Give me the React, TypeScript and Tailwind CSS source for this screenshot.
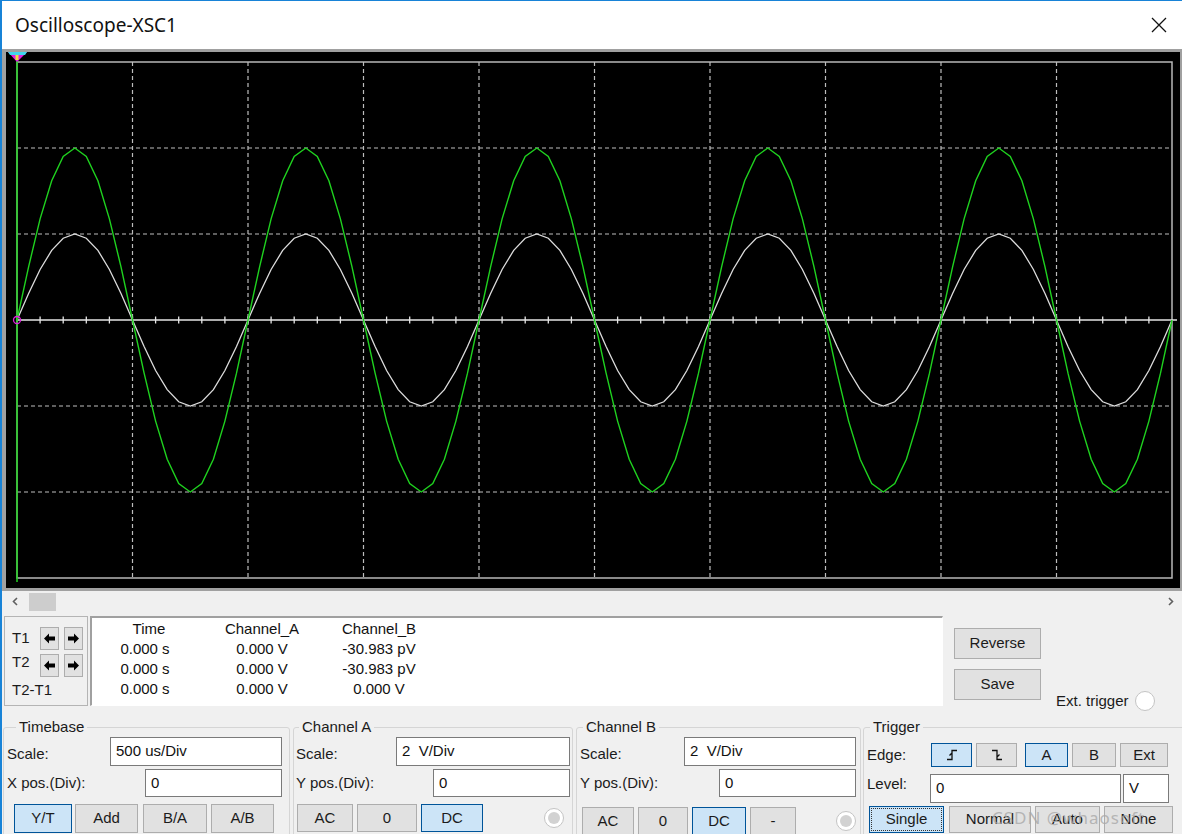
import React from "react";

const GREEN = "#1fd21f";

function wave(amp: number) {
  const pts: string[] = [];
  for (let i = 0; i <= 100; i++) {
    const x = 17 + i * 11.55;
    const y = 320 - amp * Math.sin((2 * Math.PI * (x - 17)) / 231);
    pts.push(`${x.toFixed(1)},${y.toFixed(1)}`);
  }
  return pts.join(" ");
}

function Scope() {
  const vx = [1, 2, 3, 4, 5, 6, 7, 8, 9].map((i) => 17 + i * 115.5);
  const hy = [1, 2, 4, 5].map((j) => 62 + j * 86);
  const ticks = Array.from({ length: 49 }, (_, k) => 17 + (k + 1) * 23.1);
  return (
    <svg width="1174" height="536" viewBox="6 52 1174 536" className="block">
      <rect x="17" y="62" width="1155" height="516" fill="none" stroke="#b8b8b8" strokeWidth="1.5" />
      {vx.map((x) => (
        <line key={x} x1={x} y1="62" x2={x} y2="578" stroke="#bdbdbd" strokeWidth="1.2" strokeDasharray="4 3" />
      ))}
      {hy.map((y) => (
        <line key={y} x1="17" y1={y} x2="1172" y2={y} stroke="#bdbdbd" strokeWidth="1.2" strokeDasharray="4 3" />
      ))}
      <line x1="17" y1="320" x2="1177" y2="320" stroke="#e6e6e6" strokeWidth="1.5" />
      {ticks.map((x) => (
        <line key={x} x1={x} y1="316.5" x2={x} y2="323.5" stroke="#e6e6e6" strokeWidth="1.3" />
      ))}
      <polyline points={wave(86)} fill="none" stroke="#dcdcdc" strokeWidth="1.3" />
      <polyline points={wave(172)} fill="none" stroke={GREEN} strokeWidth="1.4" />
      <line x1="17" y1="60" x2="17" y2="582" stroke={GREEN} strokeWidth="1.5" />
      <polygon points="8,52 27,52 17,62" fill="#e01fe0" />
      <polygon points="8,52 27,52 25,55 10,55" fill="#3fd6ee" />
      <rect x="15.5" y="55" width="3" height="5" fill="#f0e040" />
      <circle cx="17" cy="320" r="3.5" fill="none" stroke="#e01fe0" strokeWidth="1.3" />
    </svg>
  );
}

function Arrow({ dir }: { dir: "l" | "r" }) {
  return (
    <svg width="11" height="11" viewBox="0 0 11 11">
      <polygon
        points={dir === "l" ? "0,5.5 5,0.5 5,3.5 11,3.5 11,7.5 5,7.5 5,10.5" : "11,5.5 6,0.5 6,3.5 0,3.5 0,7.5 6,7.5 6,10.5"}
        fill="#000"
      />
    </svg>
  );
}

function ArrowBtn({ dir }: { dir: "l" | "r" }) {
  return (
    <div className="flex h-[23px] w-[19px] items-center justify-center border border-[#adadad] bg-[#e1e1e1]">
      <Arrow dir={dir} />
    </div>
  );
}

function Btn({ label, w, h = 29, on = false, children }: { label?: string; w: number; h?: number; on?: boolean; children?: React.ReactNode }) {
  return (
    <div
      style={{ width: w, height: h }}
      className={`flex shrink-0 items-center justify-center border ${on ? "border-[#005499] bg-[#cce4f7]" : "border-[#adadad] bg-[#e1e1e1]"}`}
    >
      {children ?? label}
    </div>
  );
}

function Field({ value, w, h = 29 }: { value: string; w: number; h?: number }) {
  return (
    <div style={{ width: w, height: h }} className="flex shrink-0 items-center whitespace-pre border border-[#7a7a7a] bg-white pl-[5px] text-[#111]">
      {value}
    </div>
  );
}

function Radio({ filled }: { filled?: boolean }) {
  return (
    <div className="flex h-[20px] w-[20px] items-center justify-center rounded-full border border-[#c4c4c4] bg-white">
      {filled && <div className="h-[12px] w-[12px] rounded-full bg-[#d2d2d2]" />}
    </div>
  );
}

export default function App() {
  return (
    <div className="relative h-[834px] w-[1182px] overflow-hidden border-l-2 border-t border-[#1883d7] bg-[#f0f0f0] font-['Liberation_Sans',Arial,sans-serif] text-[15px] text-[#1b1b1b]">
      <div className="flex h-[48px] items-center justify-between bg-white pl-[13px] pr-[14px]">
        <span className="font-['Noto_Sans',sans-serif] text-[19px] text-[#111]">Oscilloscope-XSC1</span>
        <svg width="16" height="16" viewBox="0 0 16 16" className="mr-[1px]">
          <path d="M1 1 L15 15 M15 1 L1 15" stroke="#111" strokeWidth="1.3" />
        </svg>
      </div>

      <div className="h-[542px] border-b-[3px] border-l-[4px] border-r-[2px] border-t-[3px] border-[#a0a0a0] bg-black">
        <Scope />
      </div>

      <div className="flex h-[21px] items-center">
        <svg width="6" height="9" viewBox="0 0 6 9" className="ml-[10px]">
          <path d="M5 1 L1.5 4.5 L5 8" stroke="#606060" strokeWidth="1.6" fill="none" />
        </svg>
        <div className="ml-[11px] h-[18px] w-[27px] bg-[#cdcdcd]" />
        <svg width="6" height="9" viewBox="0 0 6 9" className="ml-auto mr-[8px]">
          <path d="M1 1 L4.5 4.5 L1 8" stroke="#606060" strokeWidth="1.6" fill="none" />
        </svg>
      </div>

      <div className="mt-[4px] flex h-[90px] pl-[2px]">
        <div className="w-[84px] border border-[#b4b4b4] pl-[7px] pt-[10px]">
          <div className="flex h-[23px] items-center">
            <span className="w-[28px]">T1</span>
            <ArrowBtn dir="l" />
            <div className="w-[5px]" />
            <ArrowBtn dir="r" />
          </div>
          <div className="mt-[4px] flex h-[23px] items-center">
            <span className="-mt-[6px] w-[28px]">T2</span>
            <ArrowBtn dir="l" />
            <div className="w-[5px]" />
            <ArrowBtn dir="r" />
          </div>
          <div className="mt-[3px] h-[20px] leading-[20px]">T2-T1</div>
        </div>
        <div className="ml-[2px] w-[853px] border-b border-l-2 border-r border-t-2 border-b-white border-l-[#a0a0a0] border-r-white border-t-[#a0a0a0] bg-white pt-[1px] leading-[20px] text-[#111]">
          <div className="grid grid-cols-[106px_128px_106px] text-center">
            <span className="pl-[8px]">Time</span>
            <span>Channel_A</span>
            <span>Channel_B</span>
            <span>0.000 s</span>
            <span>0.000 V</span>
            <span>-30.983 pV</span>
            <span>0.000 s</span>
            <span>0.000 V</span>
            <span>-30.983 pV</span>
            <span>0.000 s</span>
            <span>0.000 V</span>
            <span>0.000 V</span>
          </div>
        </div>
        <div className="ml-[11px] flex flex-col pt-[12px]">
          <Btn label="Reverse" w={87} h={31} />
          <div className="h-[10px]" />
          <Btn label="Save" w={87} h={31} />
        </div>
        <div className="ml-[15px] flex items-end gap-[6px]">
          <span className="mb-[-5px] leading-[20px]">Ext. trigger</span>
          <div className="mb-[-5px]">
            <Radio />
          </div>
        </div>
      </div>

      <div className="mt-[11px] flex items-start">
        <fieldset className="ml-[1px] h-[140px] w-[287px] shrink-0 rounded-[3px] border border-[#d5d5d5] pl-[3px] pr-[7px]">
          <legend className="ml-[9px] px-[3px] leading-[20px]">Timebase</legend>
          <div className="flex h-[29px] items-center justify-between">
            <span className="mt-[5px]">Scale:</span>
            <Field value="500 us/Div" w={172} />
          </div>
          <div className="mt-[3px] flex h-[28px] items-center justify-between">
            <span>X pos.(Div):</span>
            <Field value="0" w={137} h={28} />
          </div>
          <div className="ml-[7px] mt-[7px] flex">
            <Btn label="Y/T" w={58} on />
            <div className="w-[3px]" />
            <Btn label="Add" w={63} />
            <div className="w-[5px]" />
            <Btn label="B/A" w={64} />
            <div className="w-[4px]" />
            <Btn label="A/B" w={63} />
          </div>
        </fieldset>

        <fieldset className="ml-[3px] h-[140px] w-[280px] shrink-0 rounded-[3px] border border-[#d5d5d5] pl-[2px] pr-[2px]">
          <legend className="ml-[3px] px-[3px] leading-[20px]">Channel A</legend>
          <div className="flex h-[29px] items-center justify-between">
            <span className="mt-[5px]">Scale:</span>
            <Field value="2  V/Div" w={174} />
          </div>
          <div className="mt-[3px] flex h-[28px] items-center justify-between">
            <span>Y pos.(Div):</span>
            <Field value="0" w={137} h={28} />
          </div>
          <div className="ml-[1px] mt-[7px] flex items-center">
            <Btn label="AC" w={56} h={28} />
            <div className="w-[4px]" />
            <Btn label="0" w={60} h={28} />
            <div className="w-[4px]" />
            <Btn label="DC" w={62} h={28} on />
            <div className="ml-[61px]">
              <Radio filled />
            </div>
          </div>
        </fieldset>

        <fieldset className="ml-[3px] h-[140px] w-[284px] shrink-0 rounded-[3px] border border-[#d5d5d5] pl-[3px] pr-[4px]">
          <legend className="ml-[3px] px-[3px] leading-[20px]">Channel B</legend>
          <div className="flex h-[29px] items-center justify-between">
            <span className="mt-[5px]">Scale:</span>
            <Field value="2  V/Div" w={172} />
          </div>
          <div className="mt-[3px] flex h-[28px] items-center justify-between">
            <span>Y pos.(Div):</span>
            <Field value="0" w={137} h={28} />
          </div>
          <div className="ml-[2px] mt-[10px] flex items-center">
            <Btn label="AC" w={52} h={28} />
            <div className="w-[4px]" />
            <Btn label="0" w={50} h={28} />
            <div className="w-[4px]" />
            <Btn label="DC" w={54} h={28} on />
            <div className="w-[4px]" />
            <Btn label="-" w={46} h={28} />
            <div className="ml-[40px]">
              <Radio filled />
            </div>
          </div>
        </fieldset>

        <fieldset className="ml-[2px] h-[140px] w-[330px] shrink-0 rounded-[3px] border border-[#d5d5d5] pl-[3px]">
          <legend className="ml-[3px] px-[3px] leading-[20px]">Trigger</legend>
          <div className="flex h-[30px] items-center pt-[6px]">
            <span className="w-[64px]">Edge:</span>
            <Btn w={41} h={24} on>
              <svg width="14" height="12" viewBox="0 0 14 12">
                <path d="M2 10.5 H7 V1.5 H12 M4.5 6.5 L7 4" stroke="#111" strokeWidth="1.3" fill="none" />
              </svg>
            </Btn>
            <div className="w-[4px]" />
            <Btn w={41} h={24}>
              <svg width="14" height="12" viewBox="0 0 14 12">
                <path d="M2 1.5 H7 V10.5 H12 M7 8 L9.5 5.5" stroke="#111" strokeWidth="1.3" fill="none" />
              </svg>
            </Btn>
            <div className="w-[8px]" />
            <Btn label="A" w={43} h={24} on />
            <div className="w-[4px]" />
            <Btn label="B" w={44} h={24} />
            <div className="w-[4px]" />
            <Btn label="Ext" w={48} h={24} />
          </div>
          <div className="mt-[7px] flex h-[29px] items-center">
            <span className="-mt-[8px] w-[63px]">Level:</span>
            <Field value="0" w={191} />
            <div className="w-[2px]" />
            <Field value="V" w={46} />
          </div>
          <div className="ml-[2px] mt-[3px] flex">
            <div className="flex h-[27px] w-[75px] items-center justify-center border border-[#005499] bg-[#cce4f7]">
              <div className="flex h-[23px] w-[71px] items-center justify-center border border-dotted border-[#333]">Single</div>
            </div>
            <div className="w-[5px]" />
            <Btn label="Normal" w={82} h={27} />
            <div className="w-[4px]" />
            <Btn label="Auto" w={65} h={27} />
            <div className="w-[4px]" />
            <Btn label="None" w={69} h={27} />
          </div>
        </fieldset>
      </div>

      <div className="pointer-events-none absolute left-[990px] top-[804px] whitespace-nowrap font-['Noto_Sans',sans-serif] text-[17px] tracking-[1px] text-[#a8a8a8]/80">
        CSDN @whaosoft
      </div>
    </div>
  );
}
